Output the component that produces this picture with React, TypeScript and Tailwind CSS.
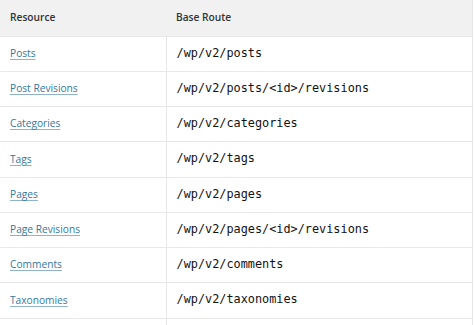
const rows: [string, string][] = [
  ['Posts', '/wp/v2/posts'],
  ['Post Revisions', '/wp/v2/posts/<id>/revisions'],
  ['Categories', '/wp/v2/categories'],
  ['Tags', '/wp/v2/tags'],
  ['Pages', '/wp/v2/pages'],
  ['Page Revisions', '/wp/v2/pages/<id>/revisions'],
  ['Comments', '/wp/v2/comments'],
  ['Taxonomies', '/wp/v2/taxonomies'],
];

export default function App() {
  return (
    <div className="w-[474px] h-[325px] overflow-hidden bg-white">
      <table className="w-[473px] border-collapse border-r border-[#e6e6e6] font-['Open_Sans',sans-serif] text-[10.2px]">
        <thead>
          <tr className="h-[36px] bg-[#f1f1f1]">
            <th className="w-[166px] pl-[10px] text-left font-semibold text-[#333]">Resource</th>
            <th className="pl-[10px] text-left font-semibold text-[#333]">Base Route</th>
          </tr>
        </thead>
        <tbody>
          {rows.map(([name, route]) => (
            <tr key={name} className="h-[35.25px] border-t border-[#e8e8e8]">
              <td className="w-[166px] pl-[10px] border-r border-[#e6e6e6]">
                <a href="#" className="text-[#34779f] underline underline-offset-2 decoration-[#8fb3c9]">
                  {name}
                </a>
              </td>
              <td className="pl-[10px] font-['DejaVu_Sans_Mono',monospace] text-[11.85px] text-[#111]">{route}</td>
            </tr>
          ))}
          <tr className="h-[35.25px] border-t border-[#e8e8e8]">
            <td className="w-[166px] border-r border-[#e6e6e6]"></td>
            <td></td>
          </tr>
        </tbody>
      </table>
    </div>
  );
}
